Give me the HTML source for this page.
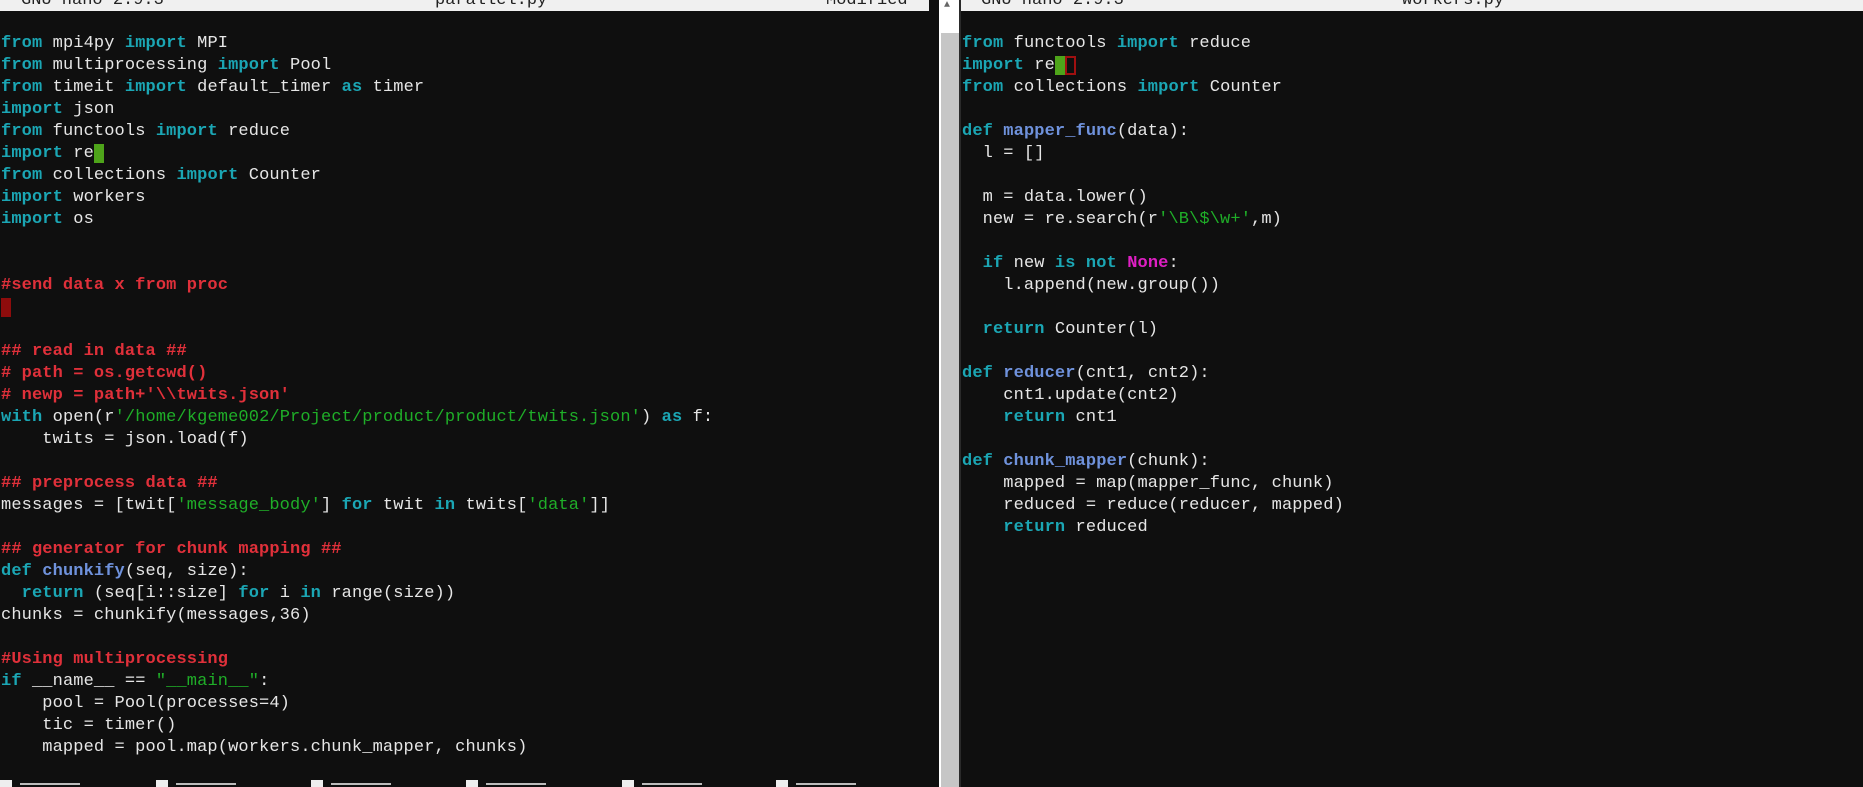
<!DOCTYPE html>
<html><head><meta charset="utf-8"><style>
body{margin:0;width:1863px;height:787px;background:#0f0f0f;overflow:hidden;position:relative;font-family:"Liberation Mono",monospace;}
.pane{position:absolute;top:0;height:787px;background:#0f0f0f;overflow:hidden}
.tb{position:absolute;top:0;left:0;right:0;height:11px;background:#f0f0f0;overflow:hidden}
.tb span{position:absolute;top:-9px;font-size:17px;color:#222;white-space:pre}
pre{position:absolute;top:11px;margin:0;font-size:17px;line-height:22px;color:#e6e6e6;letter-spacing:0.12px;font-family:"Liberation Mono",monospace}
.k{color:#1ba6b4;font-weight:bold}
.f{color:#6f92dc;font-weight:bold}
.c{color:#e0303a;font-weight:bold}
.s{color:#1fae28}
.n{color:#df1fc4;font-weight:bold}
.cg{background:#4ea41a}
.cr{background:#8e0c0c}
.co{outline:2px solid #a01010;outline-offset:-2px}
.sb{position:absolute;left:939px;top:0;width:22px;height:787px;background:#fff}
.sb .g{position:absolute;left:2px;top:33px;width:18px;height:754px;background:#c6c6c6}
.sb .a{position:absolute;left:5px;top:0;font-size:10px;color:#666}
.sc{position:absolute;left:0;top:780px;width:939px;height:7px;overflow:hidden}
.sc b{position:absolute;top:0;width:12px;height:7px;background:#eee}
.sc i{position:absolute;top:3px;height:2px;background:#bbb;width:60px}
</style></head><body>
<div class="pane" style="left:0;width:939px">
<div class="tb" style="right:10px"><span style="left:21px">GNU nano 2.9.3</span><span style="left:435px">parallel.py</span><span style="left:826px">Modified</span></div>
<pre style="left:1px">

<span class="k">from</span> mpi4py <span class="k">import</span> MPI
<span class="k">from</span> multiprocessing <span class="k">import</span> Pool
<span class="k">from</span> timeit <span class="k">import</span> default_timer <span class="k">as</span> timer
<span class="k">import</span> json
<span class="k">from</span> functools <span class="k">import</span> reduce
<span class="k">import</span> re<span class="cg"> </span>
<span class="k">from</span> collections <span class="k">import</span> Counter
<span class="k">import</span> workers
<span class="k">import</span> os


<span class="c">#send data x from proc</span>
<span class="cr"> </span>

<span class="c">## read in data ##</span>
<span class="c"># path = os.getcwd()</span>
<span class="c"># newp = path+'\\twits.json'</span>
<span class="k">with</span> open(r<span class="s">'/home/kgeme002/Project/product/product/twits.json'</span>) <span class="k">as</span> f:
    twits = json.load(f)

<span class="c">## preprocess data ##</span>
messages = [twit[<span class="s">'message_body'</span>] <span class="k">for</span> twit <span class="k">in</span> twits[<span class="s">'data'</span>]]

<span class="c">## generator for chunk mapping ##</span>
<span class="k">def</span> <span class="f">chunkify</span>(seq, size):
  <span class="k">return</span> (seq[i::size] <span class="k">for</span> i <span class="k">in</span> range(size))
chunks = chunkify(messages,36)

<span class="c">#Using multiprocessing</span>
<span class="k">if</span> __name__ == <span class="s">"__main__"</span>:
    pool = Pool(processes=4)
    tic = timer()
    mapped = pool.map(workers.chunk_mapper, chunks)
</pre>
<div class="sc"><b style="left:0"></b><i style="left:20px"></i><b style="left:156px"></b><i style="left:176px"></i><b style="left:311px"></b><i style="left:331px"></i><b style="left:466px"></b><i style="left:486px"></i><b style="left:622px"></b><i style="left:642px"></i><b style="left:776px"></b><i style="left:796px"></i></div>
</div>
<div class="sb"><div class="a">▲</div><div class="g"></div></div>
<div style="position:absolute;left:959px;top:0;width:2px;height:787px;background:#2a2a2a"></div>
<div class="pane" style="left:961px;width:902px">
<div class="tb"><span style="left:20px">GNU nano 2.9.3</span><span style="left:441px">workers.py</span></div>
<pre style="left:1px">

<span class="k">from</span> functools <span class="k">import</span> reduce
<span class="k">import</span> re<span class="cg"> </span><span class="co"> </span>
<span class="k">from</span> collections <span class="k">import</span> Counter

<span class="k">def</span> <span class="f">mapper_func</span>(data):
  l = []

  m = data.lower()
  new = re.search(r<span class="s">'\B\$\w+'</span>,m)

  <span class="k">if</span> new <span class="k">is</span> <span class="k">not</span> <span class="n">None</span>:
    l.append(new.group())

  <span class="k">return</span> Counter(l)

<span class="k">def</span> <span class="f">reducer</span>(cnt1, cnt2):
    cnt1.update(cnt2)
    <span class="k">return</span> cnt1

<span class="k">def</span> <span class="f">chunk_mapper</span>(chunk):
    mapped = map(mapper_func, chunk)
    reduced = reduce(reducer, mapped)
    <span class="k">return</span> reduced
</pre>
</div>
</body></html>
